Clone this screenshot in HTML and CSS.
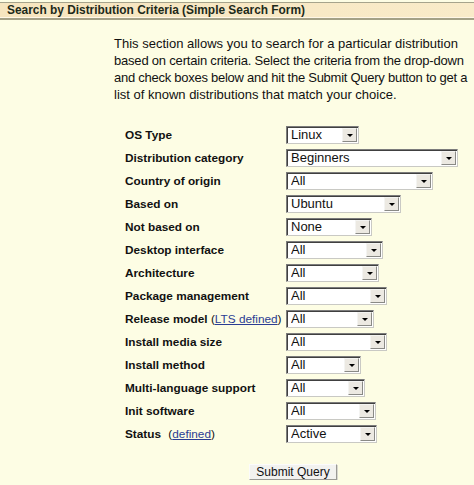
FILE: index.html
```html
<!DOCTYPE html>
<html>
<head>
<meta charset="utf-8">
<link rel="stylesheet" href="styles.css">
</head>
<body>
<div class="header">Search by Distribution Criteria (Simple Search Form)</div>
<div class="content">
  <p class="intro"><span class="line">This section allows you to search for a particular distribution</span> <span class="line tight">based on certain criteria. Select the criteria from the drop-down</span> <span class="line tighter">and check boxes below and hit the Submit Query button to get a</span> <span class="line">list of known distributions that match your choice.</span></p>
  <form class="form">
    <label class="lbl">OS Type</label>
    <span class="sel w-os"><select><option>Linux</option></select><span class="btn"></span></span>
    <label class="lbl">Distribution category</label>
    <span class="sel w-cat"><select><option>Beginners</option></select><span class="btn"></span></span>
    <label class="lbl">Country of origin</label>
    <span class="sel w-country"><select><option>All</option></select><span class="btn"></span></span>
    <label class="lbl">Based on</label>
    <span class="sel w-based"><select><option>Ubuntu</option></select><span class="btn"></span></span>
    <label class="lbl">Not based on</label>
    <span class="sel w-notbased"><select><option>None</option></select><span class="btn"></span></span>
    <label class="lbl">Desktop interface</label>
    <span class="sel w-desktop"><select><option>All</option></select><span class="btn"></span></span>
    <label class="lbl">Architecture</label>
    <span class="sel w-arch"><select><option>All</option></select><span class="btn"></span></span>
    <label class="lbl">Package management</label>
    <span class="sel w-pkg"><select><option>All</option></select><span class="btn"></span></span>
    <label class="lbl">Release model <span class="plain">(<a href="#">LTS defined</a>)</span></label>
    <span class="sel w-release"><select><option>All</option></select><span class="btn"></span></span>
    <label class="lbl">Install media size</label>
    <span class="sel w-media"><select><option>All</option></select><span class="btn"></span></span>
    <label class="lbl">Install method</label>
    <span class="sel w-method"><select><option>All</option></select><span class="btn"></span></span>
    <label class="lbl">Multi-language support</label>
    <span class="sel w-multi"><select><option>All</option></select><span class="btn"></span></span>
    <label class="lbl">Init software</label>
    <span class="sel w-init"><select><option>All</option></select><span class="btn"></span></span>
    <label class="lbl status">Status <span class="plain">(<a href="#">defined</a>)</span></label>
    <span class="sel w-status"><select><option>Active</option></select><span class="btn"></span></span>
  </form>
  <div class="submit-row"><button type="button" class="submit">Submit Query</button></div>
</div>
</body>
</html>
```

FILE: styles.css
```css
html, body {
  margin: 0;
  padding: 0;
  background: #fdfde4;
  font-family: "Liberation Sans", Arial, sans-serif;
  color: #111;
}

.header {
  margin-top: 2px;
  height: 15px;
  line-height: 15px;
  padding-left: 7px;
  background: linear-gradient(to right, #f6e5bf, #f9ebc9);
  border-top: 1px solid #a6a48c;
  border-bottom: 2px solid #a4a186;
  box-shadow: inset 0 -1px 0 #fff7e6;
  font-size: 11.9px;
  font-weight: bold;
  color: #1d2a1a;
  white-space: nowrap;
}

.content {
  margin-left: 114px;
  width: 358px;
}

.intro {
  margin: 15px 0 0 0;
  font-size: 13px;
  line-height: 17px;
  color: #111;
}

.line {
  display: block;
  white-space: nowrap;
}

.tight {
  letter-spacing: -0.2px;
}

.tighter {
  letter-spacing: -0.26px;
}

.form {
  margin: 23px 0 0 11px;
  display: grid;
  grid-template-columns: 161px auto;
  row-gap: 5px;
  justify-items: start;
  align-items: center;
}

.lbl {
  font-size: 11.8px;
  font-weight: bold;
  line-height: 18px;
  white-space: nowrap;
}

.plain {
  font-weight: normal;
}

.status .plain {
  margin-left: 4px;
}

.lbl a {
  color: #2b3c93;
  text-decoration: underline;
}

.sel {
  display: flex;
  height: 18px;
  box-sizing: border-box;
  background: #fff;
  border-top: 1px solid #7c7c7c;
  border-left: 1px solid #7c7c7c;
  border-right: 1px solid #c9c9c4;
  border-bottom: 1px solid #c9c9c4;
  box-shadow: inset 1px 1px 0 #404040;
}

.sel select {
  appearance: none;
  -webkit-appearance: none;
  flex: 1;
  min-width: 0;
  border: none;
  outline: none;
  background: transparent;
  margin: 0;
  padding: 0 0 0 4px;
  font-family: "Liberation Sans", Arial, sans-serif;
  font-size: 13px;
  line-height: 16px;
  height: 16px;
  color: #111;
}

.btn {
  width: 15px;
  height: 14px;
  margin: 1px 1px 1px 0;
  box-sizing: border-box;
  background: #ece9e2;
  border-top: 1px solid #f4f4f2;
  border-left: 1px solid #f4f4f2;
  border-right: 1px solid #8a8a86;
  border-bottom: 1px solid #8a8a86;
  display: flex;
  align-items: center;
  justify-content: center;
}

.btn::after {
  content: "";
  width: 0;
  height: 0;
  border-left: 3px solid transparent;
  border-right: 3px solid transparent;
  border-top: 3px solid #000;
  margin-top: 1px;
}

.w-os { width: 73px; }
.w-cat { width: 172px; }
.w-country { width: 147px; }
.w-based { width: 115px; }
.w-notbased { width: 86px; }
.w-desktop { width: 97px; }
.w-arch { width: 93px; }
.w-pkg { width: 101px; }
.w-release { width: 88px; }
.w-media { width: 101px; }
.w-method { width: 75px; }
.w-multi { width: 79px; }
.w-init { width: 90px; }
.w-status { width: 91px; }

.submit-row {
  margin-top: 21px;
  display: flex;
  justify-content: center;
}

.submit {
  width: 88px;
  height: 16px;
  padding: 0;
  box-sizing: border-box;
  background: #f2f2ef;
  border-top: 1px solid #fbfbfb;
  border-left: 1px solid #fbfbfb;
  border-right: 1px solid #9a9a94;
  border-bottom: 1px solid #9a9a94;
  box-shadow: 1px 1px 0 #d8d8d0;
  font-family: "Liberation Sans", Arial, sans-serif;
  font-size: 12px;
  line-height: 14px;
  color: #111;
}
```
